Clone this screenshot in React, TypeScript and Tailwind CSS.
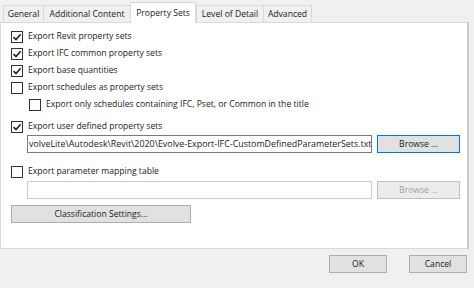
import React from "react";

const font = { fontFamily: '"Open Sans", "Noto Sans", sans-serif' };

function Check({ checked }: { checked?: boolean }) {
  return (
    <span className="w-[12px] h-[12px] border border-[#333] bg-white flex items-center justify-center shrink-0">
      {checked && (
        <svg width="10" height="10" viewBox="0 0 10 10">
          <path d="M1.5 5.2 L4 7.6 L8.6 2.2" stroke="#222" strokeWidth="1.6" fill="none" />
        </svg>
      )}
    </span>
  );
}

function Row({ checked, label, indent }: { checked?: boolean; label: string; indent?: boolean }) {
  return (
    <div className={`flex items-center gap-[5px] h-[17px] ${indent ? "pl-[18px]" : ""}`}>
      <Check checked={checked} />
      <span className="text-[8.6px] text-[#1a1a1a] leading-none">{label}</span>
    </div>
  );
}

const tabs = [
  { t: "General", w: "w-[40px]" },
  { t: "Additional Content", w: "w-[87px]" },
  { t: "Property Sets", w: "w-[66px]" },
  { t: "Level of Detail", w: "w-[67px]" },
  { t: "Advanced", w: "w-[48px]" },
];

export default function App() {
  return (
    <div className="w-[474px] h-[288px] bg-[#f0f0f0] overflow-hidden flex flex-col" style={font}>
      <div className="flex items-end h-[22px] pl-[3px] pt-[2px]">
        {tabs.map(({ t, w }) => {
          const sel = t === "Property Sets";
          return (
            <div
              key={t}
              className={
                sel
                  ? `${w} h-[21px] bg-white border border-b-0 border-[#d9d9d9] text-[8.6px] text-[#1a1a1a] flex items-center justify-center -mb-px relative z-10`
                  : `${w} h-[17px] bg-[#f0f0f0] border border-r-0 border-b-0 border-[#d9d9d9] text-[8.6px] text-[#1a1a1a] flex items-center justify-center`
              }
            >
              {t}
            </div>
          );
        })}
        <div className="h-[17px] border-l border-[#d9d9d9]" />
      </div>
      <div className="w-[469px] h-[227px] bg-white border border-[#d9d9d9] border-r-[#c8c8c8] border-r-2 pl-[10px] pt-[5px] flex flex-col">
        <Row checked label="Export Revit property sets" />
        <Row checked label="Export IFC common property sets" />
        <Row checked label="Export base quantities" />
        <Row label="Export schedules as property sets" />
        <Row indent label="Export only schedules containing IFC, Pset, or Common in the title" />
        <div className="h-[5px]" />
        <Row checked label="Export user defined property sets" />
        <div className="flex items-center gap-[5px] pl-[16px]">
          <div className="w-[345px] h-[18px] border border-[#7a7a7a] bg-white flex items-center pl-[1px]">
            <span className="text-[8.9px] text-[#1a1a1a] whitespace-nowrap leading-none">
              volveLite\Autodesk\Revit\2020\Evolve-Export-IFC-CustomDefinedParameterSets.txt
            </span>
          </div>
          <div className="w-[83px] h-[18px] border border-[#0078d7] bg-[#e1e1e1] flex items-center justify-center text-[8.6px] text-[#1a1a1a] leading-none">
            Browse ...
          </div>
        </div>
        <div className="h-[10px]" />
        <Row label="Export parameter mapping table" />
        <div className="flex items-center gap-[5px] pl-[16px] mt-[1px]">
          <div className="w-[345px] h-[18px] border border-[#cccccc] bg-white" />
          <div className="w-[83px] h-[18px] border border-[#bfbfbf] bg-[#ececec] flex items-center justify-center text-[8.6px] text-[#a0a0a0] leading-none">
            Browse ...
          </div>
        </div>
        <div className="h-[6px]" />
        <div className="w-[180px] h-[18px] border border-[#adadad] bg-[#e1e1e1] flex items-center justify-center text-[8.6px] text-[#1a1a1a] leading-none">
          Classification Settings...
        </div>
      </div>
      <div className="flex justify-end gap-[22px] pr-[7px] pt-[6px]">
        <div className="w-[58px] h-[18px] border border-[#adadad] bg-[#e1e1e1] flex items-center justify-center text-[8.6px] text-[#1a1a1a] leading-none">
          OK
        </div>
        <div className="w-[58px] h-[18px] border border-[#adadad] bg-[#e1e1e1] flex items-center justify-center text-[8.6px] text-[#1a1a1a] leading-none">
          Cancel
        </div>
      </div>
    </div>
  );
}
